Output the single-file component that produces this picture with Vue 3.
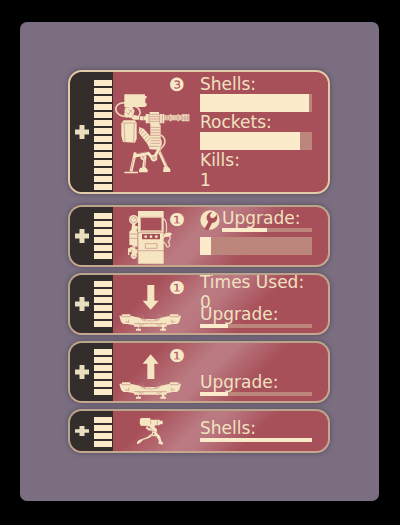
<script setup>
const cards = [
  {
    kind: 'sentry', level: '❸', pips: 14, label: 'Sentry gun',
    rows: [
      { label: 'Shells:', fill: 97, tall: true },
      { label: 'Rockets:', fill: 89, tall: true },
      { label: 'Kills:', value: '1' }
    ]
  },
  {
    kind: 'dispenser', level: '❶', pips: 6, label: 'Dispenser',
    rows: [
      { label: 'Upgrade:', fill: 50, wrench: true },
      { fill: 10, tall: true }
    ]
  },
  {
    kind: 'entrance', level: '❶', pips: 6, label: 'Teleporter entrance',
    rows: [
      { label: 'Times Used:', value: '0' },
      { label: 'Upgrade:', fill: 25 }
    ]
  },
  {
    kind: 'exit', level: '❶', pips: 6, label: 'Teleporter exit',
    rows: [{ label: 'Upgrade:', fill: 25 }]
  },
  {
    kind: 'mini', pips: 4, label: 'Mini sentry',
    rows: [{ label: 'Shells:', fill: 100 }]
  }
]
</script>

<template>
  <main class="panel">
    <section v-for="card in cards" :key="card.kind" class="card" :class="card.kind" :aria-label="card.label">
      <div class="health">
        <svg class="plus" viewBox="0 0 14 14" preserveAspectRatio="none" aria-hidden="true">
          <path d="M4.500 0h5v4.500H14v5H9.500V14h-5V9.500H0v-5h4.500z" />
        </svg>
        <div class="pips">
          <i v-for="n in card.pips" :key="n" class="pip"></i>
        </div>
      </div>

      <div class="figure">
        <svg v-if="card.kind === 'sentry'" class="art" width="79" height="90" viewBox="3 0 237 270" aria-hidden="true">
          <g class="wire thick">
            <ellipse cx="37" cy="62" rx="26" ry="20" transform="rotate(12 37 62)" />
            <ellipse cx="62" cy="68" rx="23" ry="18" transform="rotate(22 62 68)" />
            <path d="M145 138c14 4 18 22 8 34l-12 14M140 148c10 6 10 20 0 32" />
          </g>
          <path d="M37 16h62v5h5v7h-4v15h4v8h-4v3H37z" />
          <path d="M44 56l12-3 12 12-4 12 18 5v10H64l-8-8-14 2-6-10z" />
          <path class="line" d="M49 61l12 10M62 60L48 76M66 75l-8 12M44 70l8 8" />
          <path d="M35 94h34l5 8v48l-5 11-36-2-5-19v-37z" />
          <path class="line" d="M30 102h43M36 104l3 55M67 103l-2 56" />
          <path d="M84 82h18v12H84zM101 75h12v-6h28v6h16v28h-14v5h-28v-5h-14z" />
          <path class="line" d="M94 81v14M111 74v30M143 74v30M112 76h31M112 83h31M112 90h31M112 97h31M151 76v26" />
          <path d="M157 79h16v-3h5v3h18v-3h5v3h8v-3h23v21h-23v-3h-8v3h-5v-3h-18v3h-5v-3h-16z" />
          <path class="line" d="M157 84h75M157 90h75M165 78v17M173 78v17M198 78v17M210 77v19M219 77v19M227 77v19" />
          <path d="M115 107h31v62l-5 13-28-1-7-17 9-4z" />
          <path class="line" d="M115 115h31M115 123h31M115 131h31M115 139h31M115 147h31M113 155h31M109 163h34M110 172h32" />
          <path d="M82 114l14 6 22 25-3 24-8-3-27-35z" />
          <path class="line" d="M90 119l-8 13M97 125l-11 12M103 132l-11 12M109 139l-11 13M115 146l-11 14" />
          <path class="limb" d="M70 190l-13 57M66 202l43-9 15 18 17-31M99 200l-4 40M139 181l26 57" />
          <path class="line" d="M73 194l32-6M91 203l12 14M130 210l16-29M144 185l22 48M96 215l3 20M65 207l-8 36" />
          <circle cx="93" cy="205" r="8" /><circle cx="126" cy="207" r="10" />
          <circle class="line" cx="93" cy="205" r="3" /><circle class="line" cx="126" cy="207" r="4" />
          <path d="M37 248h41v5H37zM85 236h17l5 6v8H81v-7zM155 234h14l6 7v8h-22z" />
        </svg>

        <svg v-else-if="card.kind === 'dispenser'" class="art" width="60" height="58" viewBox="195 18 180 174" aria-hidden="true">
          <path class="wire" d="M310 53c11 5 10 18 9 45l-9 13M321 98c15 6 9 18 4 25 10 14-5 22-7 8l-8-9" />
          <path d="M312 99l17-5 8 5-10 8-15 1z" />
          <path d="M234 30h77v158h-77z" />
          <path class="red" d="M243 51h61v37h-61zM246 99h54v16h-54z" />
          <path class="line" d="M242 49h63v41h-63zM234 95h77M256 128h35v14h-35zM234 149h77" />
          <circle cx="257" cy="107" r="4" /><circle cx="273" cy="107" r="4" /><circle cx="289" cy="107" r="4" />
          <circle cx="221" cy="56" r="14" />
          <circle class="line" cx="221" cy="56" r="9" /><path class="line" d="M221 56l6-6" />
          <path d="M216 69h10v6h7v11h-4l4 6v45h-7v8h7v13h-5a9 9 0 1 1-13 0v-5h-7v9h-4v-20h6v-4h7v-6h-9V92l7-7v-9h1z" />
          <path class="line" d="M208 99h25M208 112h25M212 138h20M215 145v8M217 166h10M234 92v96" />
        </svg>

        <svg v-else-if="card.kind === 'entrance' || card.kind === 'exit'" class="art" width="66" height="48" viewBox="174 42 198 144" aria-hidden="true">
          <path v-if="card.kind === 'entrance'" d="M262 48h21v47h13l-24 27-24-27h14z" />
          <path v-else d="M262 126h21V80h13l-24-28-24 28h14z" />
          <path d="M178 140h8v-4h25v4l28 6 19 7v13l-22 5-34-6h-12l-7-7z" />
          <path d="M363 140h-8v-4h-25v4l-28 6-19 7v13l22 5 34-6h12l7-7z" />
          <path d="M256 150h29v16h-29zM222 164h98v9h-7v6h5v6h-17v-6h5v-6h-70v6h7v6h-15v-6h6v-6h-12z" />
          <path class="line" d="M184 143h28M196 158l10 2v-8M357 143h-28M345 158l-10 2v-8M235 140l10 12 15 4M243 136l11 14M307 140l-10 12-15 4M299 136l-11 14M262 151l4 6 5-4 5 5 5-6M222 164h98M235 164l8 6 8-5M306 164l-8 6-8-5" />
        </svg>

        <svg v-else class="art" width="30" height="29" viewBox="228 42 90 87" aria-hidden="true">
          <path d="M240 48l4-3h27v5h28v3h9v11h-9v3h-12l-4 4 8 8-1 10 10 10 4 15 6 7-4 4-12-4 3-7-8-14-12-1-12 7-16 5-9 9-9 4v-7l6-6 25-9 15-12-2-7-11-1-7-8 5-5-20-1-3-7z" />
          <path class="line" d="M272 52v12M292 52v13M257 69l11 2M268 75l9 4M274 84l10 2M273 97l9 4M248 109l6 5M289 101l-3 5M298 111l-4 3" />
          <path class="red" d="M264 71h6v4h-6zM279 91h4v4h-4z" />
        </svg>
        <span v-if="card.level" class="level">{{ card.level }}</span>
      </div>

      <div class="stats">
        <div v-for="(row, i) in card.rows" :key="i" class="row">
          <svg v-if="row.wrench" class="wrench" width="20" height="20" viewBox="0 0 60 60" aria-hidden="true">
            <circle cx="30" cy="30" r="29" />
            <path class="red" d="M13 58l12-23c-7-7-7-17 0-24 3-3 7-5 11-5l-6 9 2 8 8 2 7-6 2-6c5 9 3 18-4 23-3 2-6 3-9 3L25 61z" />
          </svg>
          <div class="entry">
            <div v-if="row.label" class="text">{{ row.label }}</div>
            <div v-if="row.value" class="text">{{ row.value }}</div>
            <div
              v-if="row.fill !== undefined" class="bar" :class="{ tall: row.tall }"
              role="progressbar" :aria-valuenow="row.fill" aria-valuemin="0" aria-valuemax="100"
            >
              <div class="fill" :style="{ width: row.fill + '%' }"></div>
            </div>
          </div>
        </div>
      </div>
    </section>
  </main>
</template>

<style>
body {
  background: #000;
}
</style>

<style scoped>
.panel {
  display: flex;
  flex-direction: column;
  gap: 6px;
  margin: 22px 21px 22px 20px;
  padding: 48px 49px 48px 48px;
  border-radius: 7px;
  background: #7a6e80;
  font: 17px/20px "DejaVu Sans", Verdana, sans-serif;
  color: #f0e2c0;
}

.card {
  display: grid;
  grid-template-columns: 43px 87px 1fr;
  border: 2px solid #c5a78f;
  border-left-color: #b4a68f;
  border-top-color: #b9a48c;
  border-radius: 14px;
  overflow: hidden;
  background: linear-gradient(135deg, #a8505a 30%, #bb7a81 48%, #ba7880 54%, #a8505a 70%);
  box-shadow: 0 0 5px rgba(60, 50, 70, 0.6);
}

.card.sentry {
  margin-bottom: 5px;
  border-color: #e3cba6;
  background: #a8505a;
}

.health {
  display: grid;
  grid-template-columns: 24px 18px;
  align-items: center;
  background: #332e2c;
}

.plus {
  width: 14px;
  height: 14px;
  margin-left: 5px;
  fill: #e9dfc0;
}

.mini .plus {
  height: 10px;
}

.pips {
  display: grid;
  gap: 2px;
  padding: 6px 0;
}

.sentry .pips {
  padding: 8px 0 2px;
}

.mini .pips {
  padding: 6px 0 4px;
}

.pip {
  height: 6px;
  background: #fcebcb;
}

.figure {
  position: relative;
  display: grid;
  align-items: center;
}

.art,
.wrench {
  display: block;
  fill: #f5e5c0;
}

.sentry .art {
  margin-top: 4px;
}

.dispenser .art {
  margin-left: 12px;
}

.entrance .art,
.exit .art {
  margin-top: 6px;
  margin-left: 5px;
}

.mini .art {
  margin-left: 23px;
}

.line {
  fill: none;
  stroke: #c58d88;
  stroke-width: 2;
}

.wire {
  fill: none;
  stroke: #ecd0b4;
  stroke-width: 4;
}

.wire.thick {
  stroke-width: 5;
}

.limb {
  fill: none;
  stroke: #f5e5c0;
  stroke-width: 9;
}

.red {
  fill: #a8505a;
}

.level {
  position: absolute;
  top: 3px;
  left: 56px;
  font-size: 18px;
  color: #f8e8c6;
}

.stats {
  display: flex;
  flex-direction: column;
  justify-content: flex-end;
  padding: 0 16px 5px 0;
}

.sentry .stats {
  justify-content: flex-start;
  padding-top: 2px;
  padding-bottom: 0;
}

.dispenser .stats {
  gap: 5px;
  padding-bottom: 10px;
}

.mini .stats {
  padding-bottom: 9px;
}

.entrance .row + .row {
  margin-top: -8px;
}

.entrance .stats {
  margin-top: -3px;
}

.row {
  display: flex;
  align-items: center;
  gap: 2px;
}

.entry {
  flex: 1;
}

.text {
  white-space: nowrap;
}

.bar {
  height: 4px;
  background: #bd867d;
}

.bar.tall {
  height: 18px;
}

.fill {
  height: 100%;
  background: #fcebcb;
}
</style>
